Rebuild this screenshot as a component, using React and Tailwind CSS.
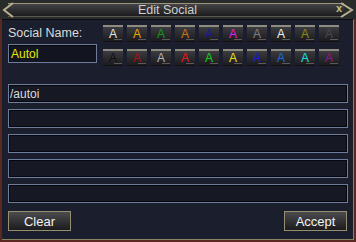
import React from "react";

const row1 = ["#e4e4e4", "#e8a800", "#109a10", "#c87812", "#1818a8", "#e020e0", "#808080", "#eeeeee", "#8a8a10", "#484848"];
const row2 = ["#101010", "#a81010", "#b4b4b4", "#e81818", "#18d018", "#e8e018", "#1818e0", "#1868e0", "#18e0e0", "#881888"];

function ColorBtn({ c }) {
  return (
    <div className="relative w-[20px] h-[17px] border-t-2 border-t-[#8e8c80] border-b border-b-[#111] bg-gradient-to-b from-[#3c3c40] to-[#1c1c20] flex items-center justify-center">
      <span className="text-[12px] leading-none -mt-[1px]" style={{ color: c }}>A</span>
      <div className="absolute right-[1px] bottom-[1px] w-[8px] h-[1px] bg-[#5a5a5a]" />
    </div>
  );
}

function TextBox({ children }) {
  return (
    <div className="h-[19px] border border-[#6f7d9c] shadow-[inset_1px_1px_0_#05070c,inset_-1px_-1px_0_#05070c] bg-[#161924] flex items-center px-[1px] text-[12px] text-[#dcdcdc]">
      {children}
    </div>
  );
}

function Btn({ children }) {
  return (
    <div className="w-[63px] h-[20px] border border-[#958f72] bg-gradient-to-b from-[#4c4c50] to-[#1c1c1e] flex items-center justify-center text-[13px] text-[#f2f2f2] leading-none">
      {children}
    </div>
  );
}

export default function App() {
  return (
    <div className="w-[356px] h-[242px] bg-[#5a2a22] overflow-hidden flex flex-col" style={{ fontFamily: '"Liberation Sans", Arial, sans-serif' }}>
      {/* title bar */}
      <div className="relative h-[19px] bg-[#2a2c2c] flex items-center">
        <div className="absolute left-[8px] right-[12px] top-[3px] h-[14px] border-t border-t-[#9a9578] border-b border-b-[#5a5850] bg-gradient-to-b from-[#444446] to-[#1c1c1e] flex items-center pl-[130px]">
          <span className="text-[12.5px] text-[#cfcfcf] leading-none">Edit Social</span>
        </div>
        <svg className="absolute left-[2px] top-[2px]" width="12" height="16" viewBox="0 0 12 16">
          <path d="M11 1 L2 8 L11 15" stroke="#b8b090" strokeWidth="2" fill="none" />
        </svg>
        <svg className="absolute right-[2px] top-[2px]" width="14" height="16" viewBox="0 0 14 16">
          <path d="M1 1 L12 8 L1 15" stroke="#b8b090" strokeWidth="2" fill="none" />
        </svg>
        <span className="absolute left-[336px] top-[3px] text-[11px] font-bold text-[#c8c080] leading-none">x</span>
      </div>
      {/* body */}
      <div className="flex-1 ml-[2px] mr-[2px] mb-[2px] bg-[#1b1f2d] border-t border-t-[#0a0b10] border-r border-r-[#8a8460] border-b border-b-[#8a8460] pl-[6px] pr-[5px] pt-[5px] flex flex-col">
        <div className="flex">
          <div className="w-[89px] flex flex-col">
            <div className="h-[17px] flex items-center text-[12.5px] text-[#dadada]">Social Name:</div>
            <div className="mt-[2px] h-[19px] border border-[#6f7d9c] shadow-[inset_1px_1px_0_#05070c] bg-[#121420] flex items-center pl-[2px] text-[12px] text-[#e8e800]">Autol</div>
          </div>
          <div className="ml-[6px] grid grid-cols-[repeat(10,20px)] gap-x-[4px] gap-y-[7px]">
            {row1.map((c, i) => <ColorBtn key={"a" + i} c={c} />)}
            {row2.map((c, i) => <ColorBtn key={"b" + i} c={c} />)}
          </div>
        </div>
        <div className="mt-[18px] flex flex-col gap-[6px] w-[340px]">
          <TextBox>/autoi</TextBox>
          <TextBox />
          <TextBox />
          <TextBox />
          <TextBox />
        </div>
        <div className="mt-[8px] flex justify-between w-[339px]">
          <Btn>Clear</Btn>
          <Btn>Accept</Btn>
        </div>
      </div>
    </div>
  );
}
